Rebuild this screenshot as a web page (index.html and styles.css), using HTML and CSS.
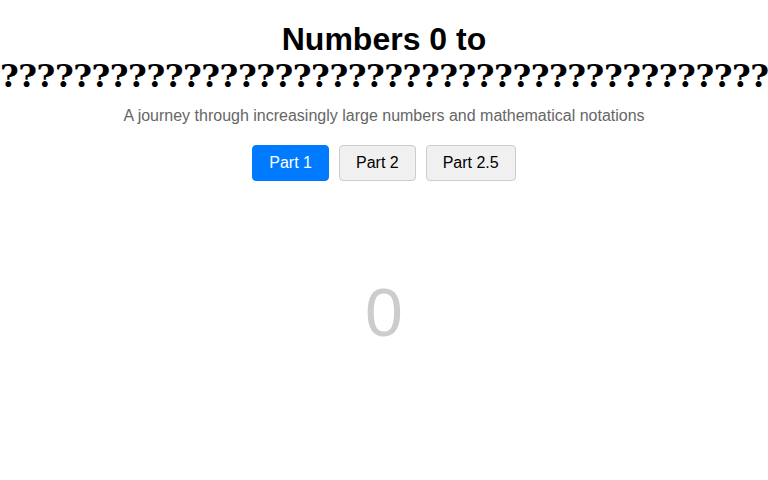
FILE: index.html
```html
<!DOCTYPE html>
<html lang="en">
<head>
<meta charset="utf-8">
<title>Numbers 0 to ?</title>
<link rel="stylesheet" href="styles.css">
</head>
<body>
<header class="header">
  <h1 class="title">Numbers 0 to <span class="marks">???????????????????????????????????????????</span></h1>
  <p class="subtitle">A journey through increasingly large numbers and mathematical notations</p>
  <nav class="tabs">
    <button class="tab active">Part 1</button>
    <button class="tab">Part 2</button>
    <button class="tab">Part 2.5</button>
  </nav>
</header>
<main class="display">
  <div class="number">0</div>
</main>
</body>
</html>
```
FILE: styles.css
```css
html, body {
  margin: 0;
  padding: 0;
  background: #ffffff;
}
body {
  font-family: "Liberation Sans", Arial, sans-serif;
  color: #000;
  text-align: center;
}
.title {
  margin: 21px 0 12px;
  font-size: 32px;
  font-weight: bold;
  line-height: 36.8px;
}
.marks {
  font-family: "DejaVu Serif", serif;
  letter-spacing: -0.45px;
  white-space: nowrap;
}
.subtitle {
  margin: 0 0 20px;
  font-size: 16px;
  color: #666666;
}
.tabs {
  display: flex;
  justify-content: center;
  gap: 10px;
}
.tab {
  font-family: "Liberation Sans", Arial, sans-serif;
  font-size: 16px;
  line-height: 18px;
  padding: 8px 16px;
  border: 1px solid #cccccc;
  border-radius: 4px;
  background: #f0f0f0;
  color: #000;
  cursor: pointer;
}
.tab.active {
  background: #007bff;
  border-color: #007bff;
  color: #ffffff;
}
.display {
  padding-top: 92px;
}
.number {
  font-size: 68px;
  color: #cccccc;
}
```
